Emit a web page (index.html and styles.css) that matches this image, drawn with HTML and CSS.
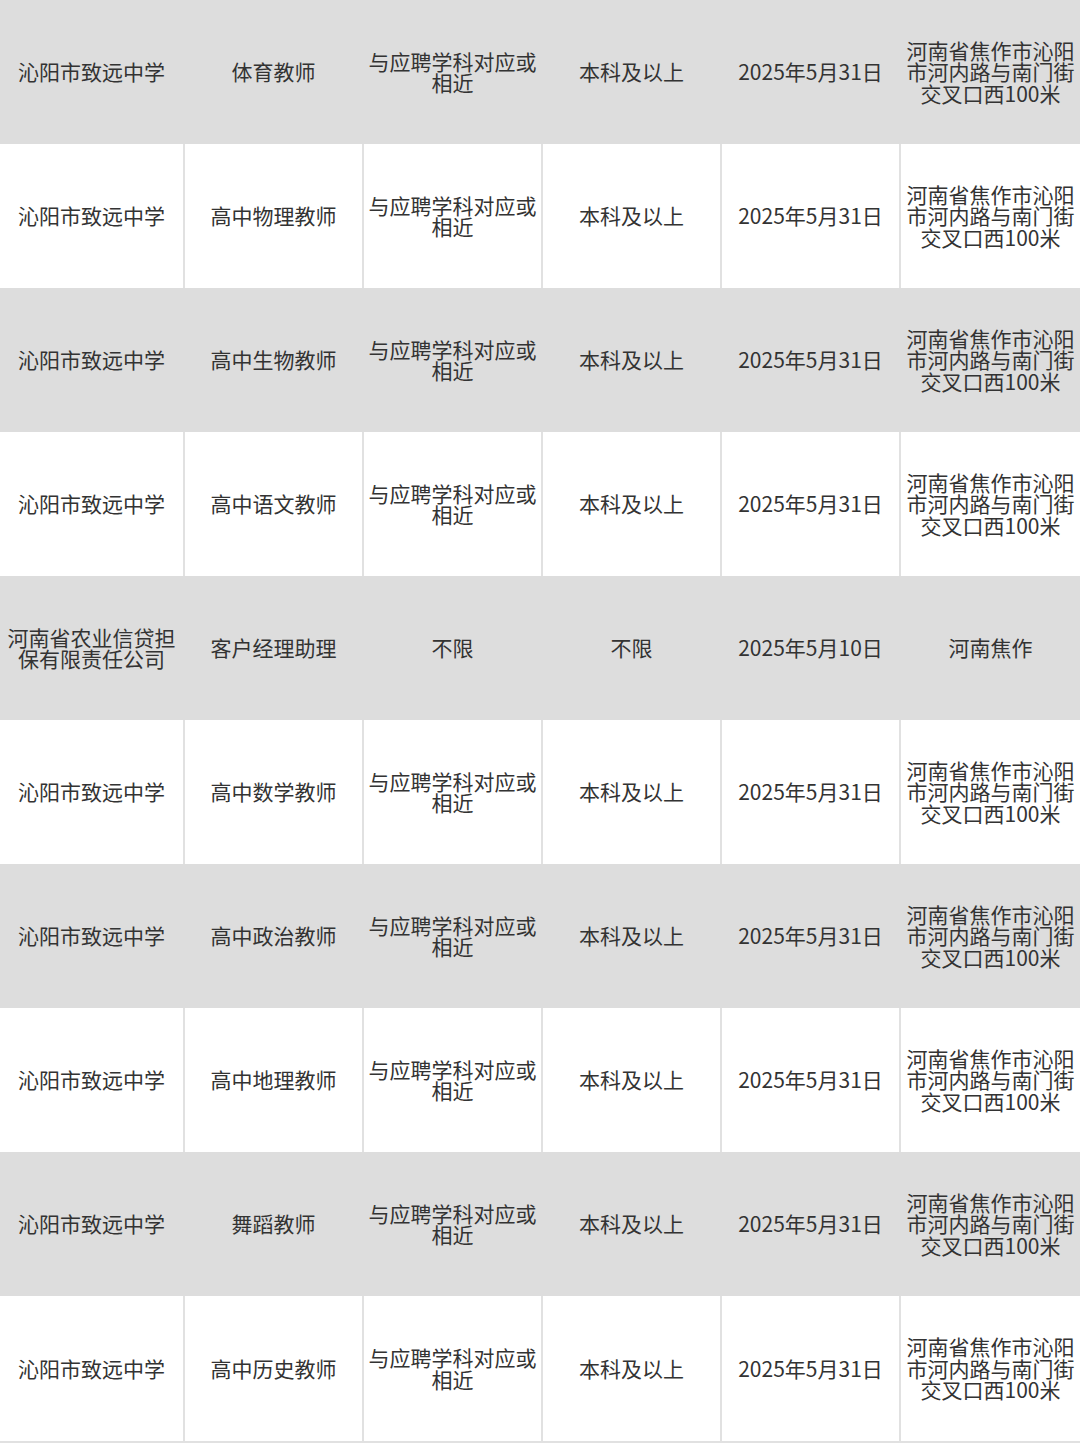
FILE: index.html
```html
<!DOCTYPE html>
<html lang="zh-CN">
<head>
<meta charset="utf-8">
<title>招聘信息</title>
<link rel="stylesheet" href="styles.css">
</head>
<body>
<div class="table">
  <div class="row gray">
    <div class="cell">沁阳市致远中学</div><div class="cell">体育教师</div><div class="cell">与应聘学科对应或相近</div><div class="cell">本科及以上</div><div class="cell">2025年5月31日</div><div class="cell">河南省焦作市沁阳市河内路与南门街交叉口西100米</div>
  </div>
  <div class="row">
    <div class="cell">沁阳市致远中学</div><div class="cell">高中物理教师</div><div class="cell">与应聘学科对应或相近</div><div class="cell">本科及以上</div><div class="cell">2025年5月31日</div><div class="cell">河南省焦作市沁阳市河内路与南门街交叉口西100米</div>
  </div>
  <div class="row gray">
    <div class="cell">沁阳市致远中学</div><div class="cell">高中生物教师</div><div class="cell">与应聘学科对应或相近</div><div class="cell">本科及以上</div><div class="cell">2025年5月31日</div><div class="cell">河南省焦作市沁阳市河内路与南门街交叉口西100米</div>
  </div>
  <div class="row">
    <div class="cell">沁阳市致远中学</div><div class="cell">高中语文教师</div><div class="cell">与应聘学科对应或相近</div><div class="cell">本科及以上</div><div class="cell">2025年5月31日</div><div class="cell">河南省焦作市沁阳市河内路与南门街交叉口西100米</div>
  </div>
  <div class="row gray">
    <div class="cell">河南省农业信贷担保有限责任公司</div><div class="cell">客户经理助理</div><div class="cell">不限</div><div class="cell">不限</div><div class="cell">2025年5月10日</div><div class="cell">河南焦作</div>
  </div>
  <div class="row">
    <div class="cell">沁阳市致远中学</div><div class="cell">高中数学教师</div><div class="cell">与应聘学科对应或相近</div><div class="cell">本科及以上</div><div class="cell">2025年5月31日</div><div class="cell">河南省焦作市沁阳市河内路与南门街交叉口西100米</div>
  </div>
  <div class="row gray">
    <div class="cell">沁阳市致远中学</div><div class="cell">高中政治教师</div><div class="cell">与应聘学科对应或相近</div><div class="cell">本科及以上</div><div class="cell">2025年5月31日</div><div class="cell">河南省焦作市沁阳市河内路与南门街交叉口西100米</div>
  </div>
  <div class="row">
    <div class="cell">沁阳市致远中学</div><div class="cell">高中地理教师</div><div class="cell">与应聘学科对应或相近</div><div class="cell">本科及以上</div><div class="cell">2025年5月31日</div><div class="cell">河南省焦作市沁阳市河内路与南门街交叉口西100米</div>
  </div>
  <div class="row gray">
    <div class="cell">沁阳市致远中学</div><div class="cell">舞蹈教师</div><div class="cell">与应聘学科对应或相近</div><div class="cell">本科及以上</div><div class="cell">2025年5月31日</div><div class="cell">河南省焦作市沁阳市河内路与南门街交叉口西100米</div>
  </div>
  <div class="row last">
    <div class="cell">沁阳市致远中学</div><div class="cell">高中历史教师</div><div class="cell">与应聘学科对应或相近</div><div class="cell">本科及以上</div><div class="cell">2025年5月31日</div><div class="cell">河南省焦作市沁阳市河内路与南门街交叉口西100米</div>
  </div>
</div>
</body>
</html>
```
FILE: styles.css
```css
html, body {
  margin: 0;
  padding: 0;
  background: #ffffff;
}
body {
  font-family: "Noto Sans CJK SC", "Noto Sans", sans-serif;
  color: #333333;
  font-size: 21px;
}
.table {
  width: 1080px;
  display: flex;
  flex-direction: column;
}
.row {
  display: flex;
  height: 144px;
  background: #ffffff;
}
.row.gray {
  background: #dddddd;
}
.row.last {
  height: 145px;
  border-bottom: 2px solid #e1e1e1;
}
.cell {
  box-sizing: border-box;
  width: 179px;
  border-left: 2px solid #e1e1e1;
  display: flex;
  align-items: center;
  justify-content: center;
  text-align: center;
  line-height: 21.5px;
  padding: 0 4px;
}
.gray .cell {
  border-left-color: #dddddd;
}
.cell:first-child {
  width: 183px;
  border-left: none;
}
.cell:last-child {
  width: 181px;
}
```
